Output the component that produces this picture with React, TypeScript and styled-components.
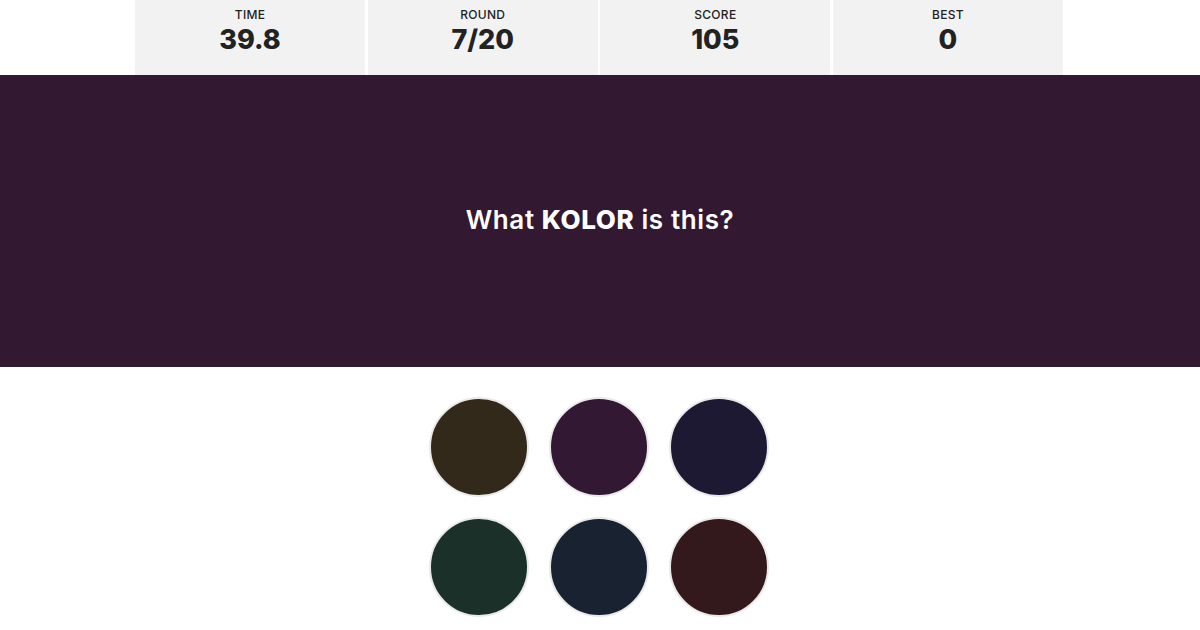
import styled, { createGlobalStyle } from "styled-components";

const GlobalStyle = createGlobalStyle`
  html, body {
    margin: 0;
    padding: 0;
    background: #fff;
    font-family: Inter, "Open Sans", sans-serif;
    color: #222;
  }
`

const StatsBar = styled.div`
  width: 928px;
  margin: 0 0 0 135px;
  display: grid;
  grid-template-columns: repeat(4, 1fr);
  gap: 2.5px;
`

const Stat = styled.div`
  background: #f2f2f2;
  height: 75px;
  display: flex;
  flex-direction: column;
  align-items: center;
  padding-top: 8px;
  box-sizing: border-box;
`

const StatLabel = styled.span`
  font-size: 12px;
  font-weight: 500;
  line-height: 14px;
  letter-spacing: 0.3px;
`

const StatValue = styled.span`
  font-size: 27px;
  font-weight: 800;
  line-height: 36px;
  color: #222;
`

const Swatch = styled.div`
  height: 292px;
  padding-bottom: 3px;
  box-sizing: border-box;
  display: flex;
  align-items: center;
  justify-content: center;
`

const Question = styled.h1`
  margin: 0;
  color: #fff;
  font-size: 26px;
  font-weight: 600;
  letter-spacing: 0.6px;
  strong {
    font-weight: 800;
  }
`

const Choices = styled.div`
  display: grid;
  grid-template-columns: repeat(3, 100px);
  gap: 20px;
  justify-content: center;
  padding: 30px 0 0;
  margin-left: -2px;
`

const Choice = styled.button<{ $color: string }>`
  width: 100px;
  height: 100px;
  border-radius: 50%;
  border: 2px solid #e9e9e9;
  background: ${p => p.$color};
  padding: 0;
  cursor: pointer;
`

const stats = [
  { label: "TIME", value: "39.8" },
  { label: "ROUND", value: "7/20" },
  { label: "SCORE", value: "105" },
  { label: "BEST", value: "0" },
]

const target = "#321830"

const options = ["#33291a", "#321832", "#1e1932", "#1a3028", "#182230", "#33181c"]

const App = () => {
  return <>
    <GlobalStyle />
    <StatsBar>
      {stats.map(s => (
        <Stat key={s.label}>
          <StatLabel>{s.label}</StatLabel>
          <StatValue>{s.value}</StatValue>
        </Stat>
      ))}
    </StatsBar>
    <Swatch style={{ background: target }}>
      <Question>What <strong>KOLOR</strong> is this?</Question>
    </Swatch>
    <Choices>
      {options.map(c => <Choice key={c} $color={c} />)}
    </Choices>
  </>
}

export default App;
